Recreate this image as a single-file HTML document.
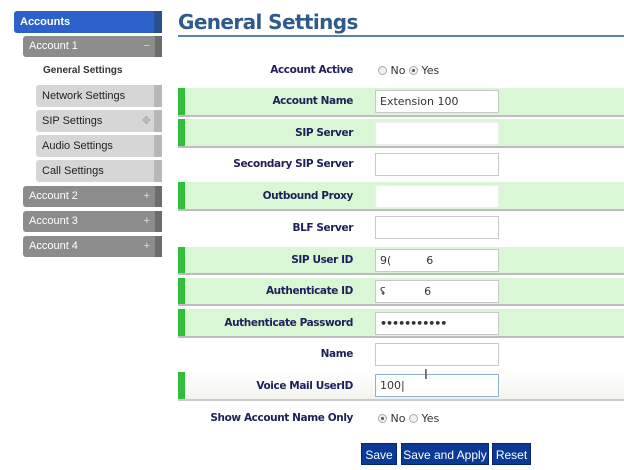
<!DOCTYPE html>
<html><head><style>
body{margin:0;width:624px;height:470px;background:#fff;font-family:"DejaVu Sans","Liberation Sans",sans-serif;position:relative;overflow:hidden}
.a{position:absolute}
.side{font-family:"Liberation Sans",sans-serif;font-size:11px;color:#fff;box-sizing:border-box;padding-left:6px;border-radius:3px 0 0 3px}
.acc{background:#8c8c8c;left:23px;width:139px;height:21px;line-height:21px}
.acc:after{content:"";position:absolute;right:0;top:0;width:7px;height:100%;background:#6d6d6d}
.acc b{position:absolute;right:12px;font-weight:normal;color:#ddd}
.sub{background:#d6d6d6;color:#222;left:36px;width:126px;height:22px;line-height:22px}
.sub:after{content:"";position:absolute;right:0;top:0;width:8px;height:100%;background:#b8b8b8}
.g{left:178px;width:446px;background:#d9f7d4;border-bottom:2px solid #bdbdbd}
.g:before{content:"";position:absolute;left:0;top:0;width:7px;height:100%;background:#2fbf3a}
.lbl{right:271px;font-size:10.5px;letter-spacing:-0.4px;font-weight:bold;color:#1f1f5a;text-align:right}
.in{left:375px;width:124px;height:23px;background:#fff;border:1px solid #c8c8c8;box-sizing:border-box;font-size:11px;line-height:21px;padding-left:4px;color:#333}
.rad{font-size:11px;color:#333;left:378px}
.r{display:inline-block;width:9px;height:9px;border-radius:50%;border:1px solid #aaa;background:#f0f0f0;vertical-align:-1px;box-sizing:border-box;position:relative}
.r.on:after{content:"";position:absolute;left:2px;top:2px;width:3px;height:3px;border-radius:50%;background:#555}
.btn{top:443px;height:22px;background:#0a3a96;color:#fff;font-family:"Liberation Sans",sans-serif;font-size:12px;line-height:22px;text-align:center;border:1px solid #06286a;box-sizing:border-box}
</style></head><body>
<div class="a side" style="left:14px;top:11px;width:148px;height:22px;line-height:22px;background:#2c61cc;font-weight:bold;border-radius:3px 0 0 3px">Accounts<span class="a" style="right:0;top:0;width:8px;height:22px;background:#2a4f8f"></span></div>
<div class="a side acc" style="top:36px">Account 1<b>−</b></div>
<div class="a" style="left:43px;top:65px;font-family:'Liberation Sans',sans-serif;font-size:10px;font-weight:bold;color:#333">General Settings</div>
<div class="a side sub" style="top:85px">Network Settings</div>
<div class="a side sub" style="top:110px">SIP Settings<span class="a" style="right:11px;color:#aaa">✥</span></div>
<div class="a side sub" style="top:135px">Audio Settings</div>
<div class="a side sub" style="top:160px">Call Settings</div>
<div class="a side acc" style="top:186px">Account 2<b>+</b></div>
<div class="a side acc" style="top:211px">Account 3<b>+</b></div>
<div class="a side acc" style="top:236px">Account 4<b>+</b></div>

<div class="a" style="left:178px;top:10px;font-size:20px;font-weight:bold;color:#2e5b8c;letter-spacing:-0.6px">General Settings</div>
<div class="a" style="left:178px;top:35px;width:446px;height:2px;background:#5a82ad"></div>

<div class="a g" style="top:88px;height:27px"></div>
<div class="a g" style="top:119px;height:27px"></div>
<div class="a g" style="top:182px;height:27px"></div>
<div class="a g" style="top:247px;height:26px"></div>
<div class="a g" style="top:278px;height:26px"></div>
<div class="a g" style="top:309px;height:27px"></div>
<div class="a g" style="top:372px;height:27px;background:linear-gradient(#fff,#f3f3ee);border-bottom:2px solid #ccc"></div>

<div class="a lbl" style="top:64px">Account Active</div>
<div class="a rad" style="top:64px"><span class="r"></span> No <span class="r on"></span> Yes</div>
<div class="a lbl" style="top:95px">Account Name</div><div class="a in" style="top:90px">Extension 100</div>
<div class="a lbl" style="top:127px">SIP Server</div><div class="a in" style="top:122px;border-color:#eee"></div>
<div class="a lbl" style="top:158px">Secondary SIP Server</div><div class="a in" style="top:153px"></div>
<div class="a lbl" style="top:190px">Outbound Proxy</div><div class="a in" style="top:185px;border-color:#eee"></div>
<div class="a lbl" style="top:222px">BLF Server</div><div class="a in" style="top:216px"></div>
<div class="a lbl" style="top:254px">SIP User ID</div><div class="a in" style="top:249px">9(&nbsp;&nbsp;&nbsp;&nbsp;&nbsp;&nbsp;&nbsp;&nbsp;&nbsp;&nbsp;6</div>
<div class="a lbl" style="top:285px">Authenticate ID</div><div class="a in" style="top:280px">ʢ&nbsp;&nbsp;&nbsp;&nbsp;&nbsp;&nbsp;&nbsp;&nbsp;&nbsp;&nbsp;&nbsp;6</div>
<div class="a lbl" style="top:317px">Authenticate Password</div><div class="a in" style="top:312px;font-weight:bold;letter-spacing:-1px">•••••••••••</div>
<div class="a lbl" style="top:348px">Name</div><div class="a in" style="top:343px"></div>
<div class="a lbl" style="top:380px">Voice Mail UserID</div><div class="a in" style="top:374px;border-color:#8fb0d8">100|</div>
<div class="a" style="left:424px;top:368px;font-size:13px;color:#333">I</div>
<div class="a lbl" style="top:412px">Show Account Name Only</div>
<div class="a rad" style="top:412px"><span class="r on"></span> No <span class="r"></span> Yes</div>

<div class="a btn" style="left:361px;width:36px">Save</div>
<div class="a btn" style="left:401px;width:88px">Save and Apply</div>
<div class="a btn" style="left:492px;width:39px">Reset</div>
</body></html>
